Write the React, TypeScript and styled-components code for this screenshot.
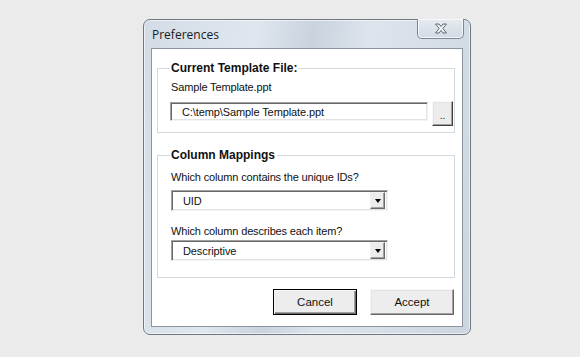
import React from "react";
import styled, { createGlobalStyle } from "styled-components";

const Global = createGlobalStyle`
  html, body { margin: 0; padding: 0; background: #ebebeb; }
  body { font-family: "Liberation Sans", "DejaVu Sans", sans-serif; }
`;

const Page = styled.div`
  width: 580px;
  height: 357px;
  box-sizing: border-box;
  padding: 19px 0 0 143px;
  background: #ebebeb;
  overflow: hidden;
`;

const Window = styled.div`
  width: 328px;
  height: 316px;
  box-sizing: border-box;
  border: 1px solid #6f7782;
  border-radius: 7px;
  background: linear-gradient(100deg, #d3dce6 0%, #dfe6ee 30%, #c9d3de 45%, #dde4ec 60%, #ccd5df 100%);
  box-shadow: inset 0 0 0 1px rgba(255, 255, 255, 0.6);
  display: flex;
  flex-direction: column;
`;

const TitleBar = styled.div`
  height: 28px;
  display: flex;
  align-items: flex-start;
  justify-content: space-between;
  padding-left: 8px;
`;

const Title = styled.div`
  font-family: "Open Sans", "Liberation Sans", sans-serif;
  font-size: 12px;
  color: #1b1b1b;
  margin-top: 6px;
`;

const CloseButton = styled.div`
  width: 47px;
  height: 20px;
  margin-right: 6px;
  margin-top: -1px;
  box-sizing: border-box;
  border: 1px solid #7d8794;
  border-top: none;
  border-radius: 0 0 5px 5px;
  background: linear-gradient(#e6ebf1, #d2dae4);
  box-shadow: inset 0 0 0 1px rgba(255, 255, 255, 0.7);
  display: flex;
  align-items: center;
  justify-content: center;
`;

const Client = styled.div`
  flex: 1;
  margin: 0 7px 7px 7px;
  background: #ffffff;
  border: 1px solid #8c949e;
  box-sizing: border-box;
  display: flex;
  flex-direction: column;
  padding: 12px 7px 0 5px;
`;

const Group = styled.fieldset<{ $h: number; $mt?: number }>`
  margin: ${(p) => p.$mt ?? 0}px 0 0 0;
  padding: 0 2px 0 12px;
  height: ${(p) => p.$h}px;
  box-sizing: border-box;
  border: 1px solid #d2d9e0;
  min-width: 0;
  display: flex;
  flex-direction: column;
`;

const Legend = styled.legend`
  padding: 0 2px 0 1px;
  font-family: "Liberation Sans", sans-serif;
  font-weight: bold;
  font-size: 12px;
  color: #111;
  line-height: 14px;
`;

const Label = styled.div<{ $mt: number }>`
  font-size: 11px;
  letter-spacing: -0.15px;
  color: #111;
  margin: ${(p) => p.$mt}px 0 0 1px;
  line-height: 14px;
  white-space: nowrap;
`;

const Row = styled.div<{ $mt: number }>`
  display: flex;
  align-items: flex-start;
  gap: 4px;
  margin-top: ${(p) => p.$mt}px;
`;

const Sunken = styled.div<{ $w: number; $h: number; $ml?: number }>`
  width: ${(p) => p.$w}px;
  height: ${(p) => p.$h}px;
  margin-left: ${(p) => p.$ml ?? 0}px;
  flex: none;
  box-sizing: border-box;
  border: 1px solid;
  border-color: #a0a0a0 #f4f4f4 #f4f4f4 #a0a0a0;
  box-shadow: inset 1px 1px 0 #696969, inset -1px -1px 0 #e3e3e3;
  background: #fff;
  display: flex;
  align-items: center;
  justify-content: space-between;
  padding: 0 2px 0 11px;
  font-size: 11px;
  letter-spacing: -0.1px;
  color: #111;
  white-space: nowrap;
`;

const Browse = styled.div`
  width: 21px;
  height: 25px;
  margin-top: -1px;
  flex: none;
  box-sizing: border-box;
  border: 1px solid;
  border-color: #f8f8f8 #404040 #404040 #f8f8f8;
  box-shadow: inset -1px -1px 0 #a0a0a0, inset 1px 1px 0 #e3e3e3;
  background: #ececec;
  display: flex;
  align-items: flex-end;
  justify-content: center;
  font-size: 10px;
  color: #222;
  line-height: 12px;
  padding-bottom: 3px;
`;

const DropButton = styled.div`
  width: 15px;
  height: 17px;
  box-sizing: border-box;
  border: 1px solid;
  border-color: #f0f0f0 #696969 #696969 #f0f0f0;
  box-shadow: inset -1px -1px 0 #a0a0a0;
  background: #ececec;
  display: flex;
  align-items: center;
  justify-content: center;
`;

const Arrow = styled.div`
  width: 0;
  height: 0;
  border-left: 3.5px solid transparent;
  border-right: 3.5px solid transparent;
  border-top: 4px solid #000;
  margin-top: 1px;
`;

const Footer = styled.div`
  display: flex;
  justify-content: flex-end;
  gap: 13px;
  margin-top: 11px;
  padding-right: 1px;
`;

const Button = styled.div<{ $default?: boolean }>`
  width: 84px;
  height: 26px;
  box-sizing: border-box;
  border: 1px solid;
  border-color: ${(p) => (p.$default ? "#000" : "#f8f8f8 #696969 #696969 #f8f8f8")};
  box-shadow: ${(p) =>
    p.$default
      ? "inset 1px 1px 0 #f8f8f8, inset -1px -1px 0 #696969, inset -2px -2px 0 #a0a0a0"
      : "inset -1px -1px 0 #a0a0a0, inset 1px 1px 0 #e3e3e3"};
  background: #ededed;
  display: flex;
  align-items: center;
  justify-content: center;
  font-size: 11.5px;
  color: #111;
`;

function Select({ value }: { value: string }) {
  return (
    <Sunken $w={217} $h={21} $ml={1}>
      <span>{value}</span>
      <DropButton>
        <Arrow />
      </DropButton>
    </Sunken>
  );
}

export default function App() {
  return (
    <>
      <Global />
      <Page>
        <Window>
          <TitleBar>
            <Title>Preferences</Title>
            <CloseButton>
              <svg width="14" height="11" viewBox="0 0 14 11">
                <path
                  d="M1.5 1 L5 1 L7 3.6 L9 1 L12.5 1 L8.8 5.5 L12.5 10 L9 10 L7 7.4 L5 10 L1.5 10 L5.2 5.5 Z"
                  fill="#f4f6f8"
                  stroke="#5f6874"
                  strokeWidth="1"
                  strokeLinejoin="round"
                />
              </svg>
            </CloseButton>
          </TitleBar>
          <Client>
            <Group $h={72}>
              <Legend>Current Template File:</Legend>
              <Label $mt={5}>Sample Template.ppt</Label>
              <Row $mt={8}>
                <Sunken $w={258} $h={19}>
                  <span>C:\temp\Sample Template.ppt</span>
                </Sunken>
                <Browse>..</Browse>
              </Row>
            </Group>
            <Group $h={130} $mt={15}>
              <Legend>Column Mappings</Legend>
              <Label $mt={8}>Which column contains the unique IDs?</Label>
              <Row $mt={6}>
                <Select value="UID" />
              </Row>
              <Label $mt={13}>Which column describes each item?</Label>
              <Row $mt={2}>
                <Select value="Descriptive" />
              </Row>
            </Group>
            <Footer>
              <Button $default>Cancel</Button>
              <Button>Accept</Button>
            </Footer>
          </Client>
        </Window>
      </Page>
    </>
  );
}
